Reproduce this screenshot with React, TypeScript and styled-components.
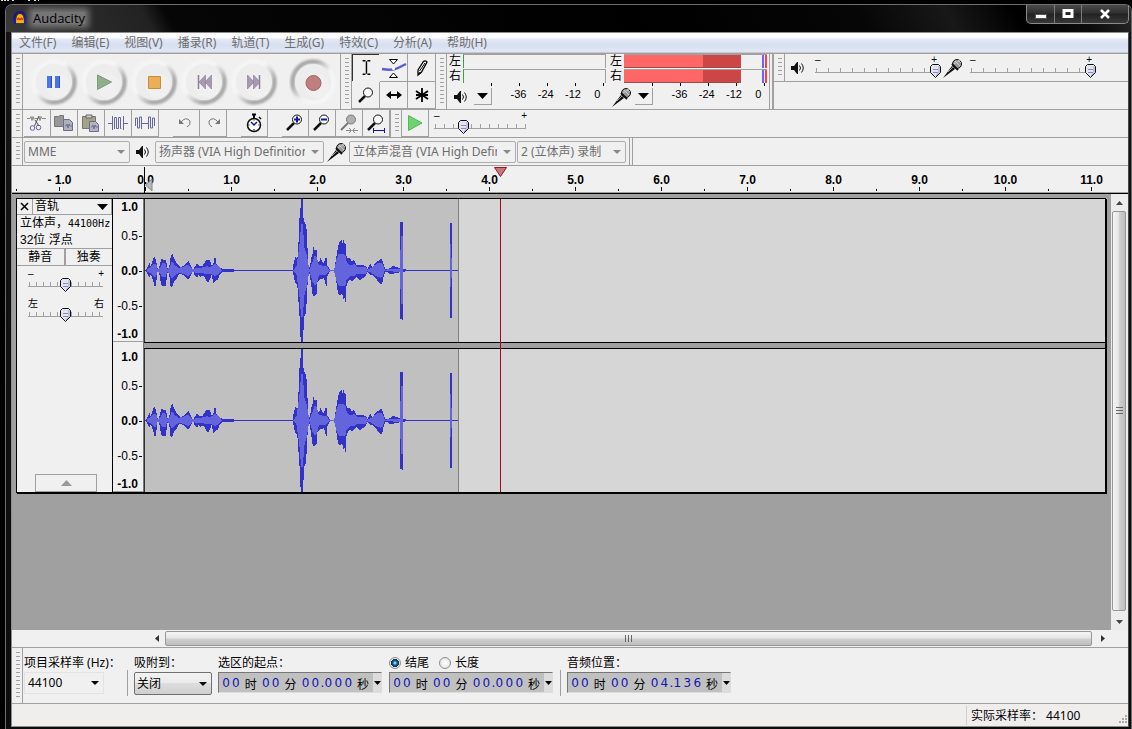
import React from "react";
import styled, { createGlobalStyle, css } from "styled-components";

const LINE = "#a0a0a0";
const FACE = "#f0f0f0";
const UI_FONT = `"Liberation Sans", "Noto Sans CJK SC", sans-serif`;
const SYSTEM_FONT = `"Noto Sans", "Noto Sans CJK SC", sans-serif`;

const svgUrl = (markup: string) => `url("data:image/svg+xml,${encodeURIComponent(markup)}")`;
const arrowImage = (color: string) =>
  svgUrl(`<svg xmlns="http://www.w3.org/2000/svg" width="8" height="4"><path d="M0 0h8L4 4z" fill="${color}"/></svg>`);
const thumbImage = svgUrl(
  `<svg xmlns="http://www.w3.org/2000/svg" width="11" height="14"><path d="M2.5 .5h6l2 2v6l-5 5-5-5v-6z" fill="#e4e4ee" stroke="#111"/><path d="M9 2v6.500L6 12" stroke="#9c9cd0" fill="none"/><path d="M3 5.500h5M3 8.500h5" stroke="#8a8ac0"/></svg>`
);

const GlobalStyle = createGlobalStyle`
  * { box-sizing: border-box; }
  body { margin: 0; background: #000; font: 12px/16px ${UI_FONT}; color: #000; }
  button, select, input { font: inherit; color: inherit; margin: 0; padding: 0; border: 0; background: none; border-radius: 0; }
  svg { display: block; }
`;

/* ---------- window frame ---------- */

const Frame = styled.div`
  min-height: 100vh;
  display: flex;
  flex-direction: column;
  background: #000;
`;
const Desktop = styled.div`
  height: 4px;
  overflow: hidden;
`;
const WindowBox = styled.div`
  flex: 1;
  display: flex;
  flex-direction: column;
  margin-left: 5px;
  padding: 0 2px 2px 5px;
  border: 1px solid #6e6e6e;
  border-width: 1px 1px 0 1px;
  border-radius: 7px 7px 0 0;
  background: linear-gradient(#141414, #0c0c0c);
`;
const TitleBar = styled.header`
  display: flex;
  align-items: flex-start;
  height: 27px;
  margin: 0 -2px 0 -5px;
  padding-left: 5px;
  border-radius: 6px 6px 0 0;
  background: linear-gradient(62deg, #3a3a3a 0, #2c2c2c 60px, #222 130px, #060606 150px, #000 560px, #060606 760px, #181818 840px, #000 900px, #0c0c0c 960px, #333 1020px, #2a2a2a 1100px);
`;
const AppIcon = styled.div`
  padding: 6px 0 0 2px;
  width: 18px;
`;
const Title = styled.h1`
  margin: 7px 0 0 4px;
  font: 13px/12px "Open Sans", sans-serif;
  color: #000;
  background: #757575;
  box-shadow: 0 0 6px 4px #757575;
`;
const CaptionButtons = styled.div`
  display: flex;
  margin-left: auto;
  margin-right: 2px;
  height: 19px;
  border: 1px solid #8a8a8a;
  border-top: 0;
  border-radius: 0 0 5px 5px;
  background: linear-gradient(#4a4a4a, #303030 45%, #222 50%, #383838);
`;
const CaptionButton = styled.button<{ $wide?: boolean }>`
  display: flex;
  align-items: center;
  justify-content: center;
  width: ${(p) => (p.$wide ? 47 : 27)}px;
  & + & { border-left: 1px solid #7a7a7a; }
`;
const Client = styled.main`
  flex: 1;
  display: flex;
  flex-direction: column;
  border: 1px solid #8c8c8c;
  border-right-color: #4a4a4a;
  background: ${FACE};
  min-width: 0;
`;
const MenuBar = styled.nav`
  display: flex;
  gap: 1px;
  height: 20px;
  border-bottom: 1px solid #c8c8d0;
  background: linear-gradient(#fcfcfe 0 5px, #e4e9f5 6px, #d8dff0 12px, #e0e6f4 18px);
`;
const MenuItem = styled.button`
  padding: 0 7px;
  font: 12px/20px ${SYSTEM_FONT};
  color: #6d6d6d;
  white-space: nowrap;
`;

/* ---------- toolbars ---------- */

const DockRow = styled.div<{ $tall?: boolean }>`
  display: flex;
  height: ${(p) => (p.$tall ? 56 : 28)}px;
  border-bottom: 1px solid ${LINE};
`;
const Dock = styled.section`
  border-top: 1px solid ${LINE};
`;
const Toolbar = styled.div<{ $end?: boolean }>`
  display: flex;
  flex: none;
  ${(p) => p.$end && css`border-right: 1px solid ${LINE};`}
`;
const Grip = styled.div`
  flex: none;
  width: 11px;
  border-right: 1px solid ${LINE};
  padding: 4px 2px 3px 4px;
  &::before {
    content: "";
    display: block;
    height: 100%;
    background: repeating-linear-gradient(${LINE} 0 1px, transparent 1px 4px);
  }
`;
const TransportButtons = styled.div`
  display: flex;
  align-items: center;
  gap: 2px;
  padding: 0 3px 0 7px;
`;
const RoundButton = styled.button<{ $spaced?: boolean }>`
  width: 48px;
  height: 48px;
  ${(p) => p.$spaced && css`margin-left: 9px;`}
`;
const ToolGrid = styled.div`
  display: grid;
  grid-template: 28px 27px / 28px 28px 28px;
`;
const IconButton = styled.button<{ $pressed?: boolean }>`
  display: flex;
  align-items: center;
  justify-content: center;
  min-width: 27px;
  border: 0 solid ${LINE};
  border-width: 0 1px 1px 0;
  ${(p) => p.$pressed && css`box-shadow: inset 1px 1px 0 #333; border-color: #f0f0f0;`}
`;
const EditButtons = styled.div`
  display: flex;
  gap: 14px;
  padding-left: 1px;
`;
const ButtonGroup = styled.div`
  display: flex;
`;

/* ---------- meters ---------- */

const MeterPane = styled.div`
  width: 161px;
  padding-left: 2px;
`;
const MeterRow = styled.div`
  display: flex;
  height: 15px;
  padding-bottom: 1px;
  line-height: 15px;
`;
const Channel = styled.span`
  width: 14px;
  font-size: 12px;
`;
const MeterTrack = styled.div<{ $green?: boolean }>`
  display: flex;
  flex: 1;
  margin-right: 2px;
  border-top: 1px solid ${LINE};
  ${(p) => p.$green && css`border-left: 1px solid #3aa53a; border-right: 1px solid ${LINE};`}
`;
const Level = styled.i<{ $w: number; $color: string; $gap?: number }>`
  width: ${(p) => p.$w}px;
  margin-left: ${(p) => p.$gap ?? 0}px;
  background: ${(p) => p.$color};
  ${(p) => p.$w > 2 && css`border-bottom: 1px solid #a04848;`}
`;
const MeterTicks = styled.div`
  height: 3px;
  margin: -1px 0 0 42px;
  background: repeating-linear-gradient(to right, #000 0 1px, transparent 1px 28px);
`;
const MeterControls = styled.div`
  display: flex;
  align-items: center;
  height: 21px;
  margin-left: -1px;
`;
const MeterIcon = styled.div`
  display: flex;
  justify-content: center;
  width: 27px;
`;
const DropButton = styled.button`
  display: flex;
  align-items: center;
  justify-content: center;
  width: 18px;
  height: 17px;
  margin-right: 13px;
  border: 0 solid ${LINE};
  border-width: 0 1px 1px 0;
`;
const ScaleLabel = styled.span<{ $last?: boolean }>`
  align-self: flex-start;
  width: ${(p) => (p.$last ? 22 : 28)}px;
  text-align: center;
  font-size: 11px;
`;

/* ---------- sliders ---------- */

const SliderBox = styled.label<{ $w: number }>`
  display: block;
  width: ${(p) => p.$w}px;
`;
const SliderSigns = styled.span`
  display: flex;
  justify-content: space-between;
  height: 9px;
  padding: 0 4px 0 5px;
  font-size: 10px;
  line-height: 9px;
`;
const Range = styled.input<{ $step: number }>`
  display: block;
  appearance: none;
  width: 100%;
  height: 15px;
  margin-top: -1px;
  background:
    linear-gradient(${LINE}, ${LINE}) 5px 9px / calc(100% - 10px) 1px no-repeat,
    repeating-linear-gradient(to right, ${LINE} 0 1px, transparent 1px ${(p) => p.$step}px) 6px 5px / calc(100% - 11px) 4px no-repeat;
  &::-webkit-slider-thumb {
    appearance: none;
    width: 11px;
    height: 14px;
    background: ${thumbImage} no-repeat;
  }
`;

type SliderProps = { name: string; w: number; step: number; value: number; low?: string; high?: string };
const Slider = ({ name, w, step, value, low = "–", high = "+" }: SliderProps) => (
  <SliderBox $w={w}>
    <SliderSigns><span>{low}</span><span>{high}</span></SliderSigns>
    <Range type="range" aria-label={name} min={0} max={100} defaultValue={value} $step={step} />
  </SliderBox>
);

const MixerColumn = styled.div`
  flex: 1;
  margin-left: 2px;
  border-left: 2px solid ${LINE};
`;
const MixerBar = styled.div`
  display: flex;
  height: 28px;
  border-bottom: 1px solid ${LINE};
`;
const IconSlot = styled.div<{ $w: number }>`
  flex: none;
  display: flex;
  align-items: center;
  justify-content: center;
  width: ${(p) => p.$w}px;
`;
const SliderCell = styled.div`
  padding-top: 1px;
`;

/* ---------- device selects ---------- */

const DeviceBar = styled(Toolbar)`
  align-items: stretch;
`;
const DeviceFields = styled.div`
  display: flex;
  align-items: center;
  padding: 0 2px 0 1px;
  border-right: 1px solid ${LINE};
`;
const DeviceSelect = styled.select<{ $w: number }>`
  appearance: none;
  width: ${(p) => p.$w}px;
  height: 22px;
  margin-right: 1px;
  padding: 0 18px 0 3px;
  border: 1px solid #adadad;
  border-radius: 2px;
  font: 12px/20px ${SYSTEM_FONT};
  color: #6d6d6d;
  background: ${arrowImage("#8a8a8a")} right 4px center no-repeat;
  overflow: hidden;
`;
const DockEnd = styled.div`
  width: 3px;
  border-right: 1px solid ${LINE};
`;

/* ---------- time ruler ---------- */

const TimeRuler = styled.div`
  display: flex;
  height: 28px;
  padding-left: 4px;
  border-bottom: 1px solid #000;
  box-shadow: inset 0 -1px ${LINE};
  overflow: hidden;
  position: relative;
`;
const RulerCell = styled.div`
  flex: none;
  width: 86px;
  height: 25px;
  padding: 6px 0 0 1px;
  text-align: center;
  font-weight: bold;
  background:
    linear-gradient(#000, #000) 43px 100% / 1px 4px no-repeat,
    linear-gradient(#000, #000) 0 100% / 1px 2px no-repeat;
`;
const Marker = styled.svg<{ $left: number; $top: number }>`
  position: absolute;
  left: ${(p) => p.$left}px;
  top: ${(p) => p.$top}px;
`;

/* ---------- tracks ---------- */

const Workspace = styled.section`
  flex: 1;
  display: flex;
  min-height: 0;
  background: ${LINE};
`;
const TrackScroller = styled.div`
  flex: 1;
  min-width: 0;
  padding: 4px 5px 0 4px;
`;
const Track = styled.article`
  display: flex;
  border: 1px solid #000;
  background: ${FACE};
  box-shadow: 1px 1px #000;
`;
const TrackPanel = styled.div`
  display: flex;
  flex-direction: column;
  flex: none;
  width: 96px;
  border-right: 1px solid #000;
`;
const TrackHead = styled.div`
  display: flex;
  height: 16px;
  border-bottom: 1px solid ${LINE};
`;
const CloseButton = styled.button`
  display: flex;
  align-items: center;
  justify-content: center;
  width: 16px;
  border-right: 1px solid ${LINE};
`;
const TrackName = styled.button`
  flex: 1;
  display: flex;
  align-items: center;
  justify-content: space-between;
  padding: 0 3px 0 2px;
  line-height: 15px;
  border-right: 1px solid ${LINE};
`;
const TrackInfo = styled.p`
  margin: 0;
  padding-left: 3px;
  line-height: 16px;
  white-space: nowrap;
  overflow: hidden;
`;
const Mono = styled.span`
  font: 10px/16px "DejaVu Sans Mono", monospace;
`;
const MuteSolo = styled.div`
  display: flex;
  height: 18px;
  border: 1px solid ${LINE};
  border-width: 1px 0;
`;
const MuteButton = styled.button`
  flex: 1;
  line-height: 16px;
  & + & { border-left: 2px solid ${LINE}; }
`;
const TrackSliders = styled.div`
  display: flex;
  flex-direction: column;
  gap: 7px;
  padding: 3px 0 0 6px;
`;
const Collapse = styled.button`
  display: flex;
  align-items: center;
  justify-content: center;
  width: 62px;
  height: 18px;
  margin: auto 0 0 18px;
  border: 1px solid ${LINE};
`;
const LevelRulers = styled.div`
  flex: none;
  display: flex;
  flex-direction: column;
  gap: 7px;
  width: 30px;
`;
const LevelRuler = styled.div`
  display: grid;
  grid-template-rows: 16px 42px 28px 42px 14px;
  align-items: center;
  height: 143px;
  border-bottom: 1px solid ${LINE};
`;
const LevelMark = styled.span<{ $bold?: boolean; $tick?: boolean }>`
  padding-right: 5px;
  text-align: right;
  font-weight: ${(p) => (p.$bold ? "bold" : "normal")};
  ${(p) => p.$tick && css`background: linear-gradient(#000, #000) right 1px center / 3px 1px no-repeat;`}
`;
const Waves = styled.div`
  flex: 1;
  min-width: 0;
  position: relative;
  border-left: 1px solid #777;
`;
const WaveLane = styled.div`
  display: flex;
  height: 143px;
  border-left: 1px solid #333;
  background: #d6d6d6;
`;
const Clip = styled.div`
  border-right: 1px solid #808080;
  background: #c0c0c0;
`;
const LaneGap = styled.div`
  height: 7px;
  border: 1px solid #000;
  border-width: 1px 0;
  background: ${LINE};
`;
const Playhead = styled.div`
  position: absolute;
  top: 0;
  bottom: 0;
  left: 356px;
  width: 1px;
  background: #b00020;
`;

/* ---------- scroll bars ---------- */

const VScroll = styled.div`
  flex: none;
  display: flex;
  flex-direction: column;
  width: 17px;
  background: #ececec;
`;
const ScrollArrow = styled.button`
  flex: none;
  display: flex;
  align-items: center;
  justify-content: center;
  width: 17px;
  height: 17px;
`;
const ThumbV = styled.div`
  flex: 1;
  display: flex;
  align-items: center;
  justify-content: center;
  margin: 0 2px 2px 1px;
  border: 1px solid #979797;
  border-radius: 2px;
  background: linear-gradient(to right, #f4f4f4, #e6e6e6 45%, #cfcfcf 55%, #bdbdc0);
`;
const HScroll = styled.div`
  display: flex;
  height: 17px;
  padding: 0 17px 0 136px;
`;
const ThumbH = styled.div`
  flex: 1;
  display: flex;
  align-items: center;
  justify-content: center;
  height: 15px;
  margin: 1px 2px 0 0;
  border: 1px solid #979797;
  border-radius: 2px;
  background: linear-gradient(#f4f4f4, #e6e6e6 45%, #cfcfcf 55%, #bdbdc0);
`;

/* ---------- selection bar ---------- */

const SelectionBar = styled.footer`
  display: flex;
  height: 57px;
  border-top: 1px solid ${LINE};
  border-bottom: 1px solid ${LINE};
`;
const Field = styled.div<{ $w: number; $divided?: boolean }>`
  width: ${(p) => p.$w}px;
  padding: 5px 0 0 1px;
  ${(p) => p.$divided && css`background: linear-gradient(${LINE}, ${LINE}) right 5px top 22px / 1px 26px no-repeat;`}
`;
const FieldLabel = styled.label`
  display: block;
  height: 19px;
  line-height: 19px;
  white-space: nowrap;
  font-family: ${SYSTEM_FONT};
`;
const RadioRow = styled.div`
  display: flex;
  gap: 10px;
  height: 19px;
`;
const RadioLabel = styled.label`
  display: flex;
  align-items: center;
  gap: 4px;
`;
const Radio = styled.input`
  appearance: none;
  width: 12px;
  height: 12px;
  border: 1px solid #8e8f8f;
  border-radius: 50%;
  background: radial-gradient(#fff, #ddd);
  &:checked { background: radial-gradient(circle, #7fd0f0 0 1px, #17608c 2px, #0d3350 4px, #e8e8e8 4px); }
`;
const RateSelect = styled.select`
  appearance: none;
  width: 80px;
  height: 22px;
  padding-left: 3px;
  border: 1px solid #e2e3ea;
  font: 12px/20px ${SYSTEM_FONT};
  background: ${arrowImage("#000")} right 4px center no-repeat;
`;
const SnapSelect = styled.select`
  appearance: none;
  width: 78px;
  height: 23px;
  padding-left: 2px;
  border: 1px solid #707070;
  border-radius: 2px;
  background: ${arrowImage("#000")} right 4px center no-repeat, linear-gradient(#f2f2f2, #ebebeb 48%, #ddd 50%, #cfcfcf);
`;
const TimeField = styled.div`
  display: flex;
  width: 164px;
  height: 21px;
  padding-left: 2px;
  border: 1px solid #777;
  border-color: #777 #ddd #ddd #777;
  background: #c0c0c0;
`;
const Digit = styled.span<{ $w: number }>`
  width: ${(p) => p.$w}px;
  text-align: center;
  font: 12px/21px "DejaVu Sans", "Noto Sans CJK SC", sans-serif;
  color: #1414b4;
`;
const Unit = styled.span`
  width: 20px;
  text-align: center;
  line-height: 24px;
`;
const TimeDrop = styled.button`
  display: flex;
  align-items: center;
  justify-content: center;
  width: 8px;
  margin-left: auto;
  background: #dcdcdc;
`;
const StatusBar = styled.div`
  display: flex;
  justify-content: flex-end;
  height: 22px;
  background: #f0eeed;
`;
const StatusText = styled.div`
  display: flex;
  justify-content: space-between;
  align-items: flex-end;
  width: 162px;
  margin: 2px 0 1px;
  padding-left: 4px;
  border-left: 1px solid #d0d0d0;
  font: 12px/19px ${SYSTEM_FONT};
`;

/* ---------- icons ---------- */

const Down = ({ w = 11, h = 6, color = "#000" }: { w?: number; h?: number; color?: string }) => (
  <svg width={w} height={h}><path d={`M0 0h${w}L${w / 2} ${h}z`} fill={color} /></svg>
);
const Speaker = () => (
  <svg width="14" height="14" viewBox="0 0 14 14">
    <path d="M0 5h3l3-4h1v12H6L3 9H0z" fill="#111" />
    <path d="M8.500 4.500q2 2.500 0 5M10.500 2.500q3.500 4.500 0 9" stroke="#111" fill="none" />
  </svg>
);
const Mic = () => (
  <svg width="20" height="20" viewBox="0 0 20 20">
    <path d="M0 20L9 8l3 3z" fill="#111" />
    <path d="M5 14l5-5" stroke="#999" />
    <circle cx="14" cy="6" r="4.500" fill="#9a9a9a" stroke="#111" />
    <path d="M9 6l6 6" stroke="#111" strokeWidth="2" />
    <path d="M12 3l5 5M15 2l3 3M11 6l6-4" stroke="#ddd" strokeWidth=".7" />
  </svg>
);
const Loupe = ({ sign, gray, arrows }: { sign?: "+" | "-"; gray?: boolean; arrows?: string }) => {
  const ink = gray ? "#777" : "#111";
  return (
    <svg width="20" height="20" viewBox="0 0 20 20">
      <path d="M9 10L2 17" stroke={ink} strokeWidth={gray ? 2 : 2.5} />
      <circle cx="12" cy="6.500" r="4.500" fill={gray ? "#b0b0b0" : "#fafafa"} stroke={ink} />
      {sign && <path d={sign === "+" ? "M9 6.500h6M12 3.500v6" : "M9 6.500h6"} stroke="#1414a0" strokeWidth="2" />}
      {arrows === "in" && <path d="M7 17.500h5M14 17.500h5M10 15l2.500 2.500L10 20M16 15l-2.500 2.500L16 20" stroke="#888" fill="none" />}
      {arrows === "out" && <path d="M7 17.500h12M7.500 15v5M18.500 15v5" stroke="#1414a0" fill="none" />}
    </svg>
  );
};

// A raised button casts a crescent to its lower right; a sunken one shows it at the upper left.
const Disc = ({ sunken, id, children }: { sunken?: boolean; id: string; children: React.ReactNode }) => (
  <svg width="48" height="48" viewBox="0 0 48 48">
    <defs>
      <linearGradient id={id} x1="0" y1="0" x2="1" y2="1">
        <stop offset={sunken ? 0.3 : 0.42} stopColor={sunken ? "#a8a8a8" : "#f5f5f5"} />
        <stop offset={sunken ? 0.56 : 0.54} stopColor={sunken ? "#f2f2f2" : "#d8d8d8"} />
        <stop offset=".72" stopColor={sunken ? "#f6f6f6" : "#a8a8a8"} />
      </linearGradient>
      <filter id={id + "b"}><feGaussianBlur stdDeviation="1" /></filter>
    </defs>
    <circle cx="24" cy="24" r="20.500" fill="none" stroke={`url(#${id})`} strokeWidth="4.500" filter={`url(#${id}b)`} />
    <circle cx="24" cy="24" r="18" fill="#ededed" />
    <ellipse cx="28" cy="28" rx="12" ry="12" fill="#f0f0f0" />
    {children}
  </svg>
);

const transport = [
  { name: "暂停", art: <><path d="M17 18h5v12h-5zM25 18h5v12h-5z" fill="#4a74ea" /><path d="M21.500 18v12M29.500 18v12" stroke="#2c50c0" /></> },
  { name: "播放", art: <path d="M17.500 17v14.500L31.500 24z" fill="#8fae8d" stroke="#7d9a7b" /> },
  { name: "停止", art: <path d="M18.500 18.500h12v12h-12z" fill="#ecae56" stroke="#c98c3c" /> },
  { name: "跳到开头", art: <><path d="M18.500 17v14" stroke="#8d7f98" strokeWidth="1.500" /><path d="M25.500 17v14L19 24zM31.500 17v14L25 24z" fill="#a799b0" stroke="#8d7f98" strokeWidth=".7" /></> },
  { name: "跳到结尾", art: <><path d="M29.500 17v14" stroke="#8d7f98" strokeWidth="1.500" /><path d="M17.500 17v14L24 24zM23.500 17v14L30 24z" fill="#a799b0" stroke="#8d7f98" strokeWidth=".7" /></> },
];

const tools = [
  { name: "选择工具", pressed: true, art: <svg width="28" height="28" viewBox="0 0 28 28"><path d="M11 6.500h3M16 6.500h3M11 20.500h3M16 20.500h3M15 7v13" stroke="#000" strokeWidth="1.500" fill="none" /></svg> },
  { name: "包络工具", art: <svg width="26" height="26" viewBox="0 0 26 26"><path d="M1 14q10 2 16-1t8-4" stroke="#5a5adc" strokeWidth="2.500" fill="none" /><path d="M8.500 4.500h8L12.500 9z" fill="#fff" stroke="#000" /><path d="M8.500 22.500h8L12.500 18z" fill="#fff" stroke="#000" /><circle cx="12.500" cy="13.500" r="1.500" fill="#fff" /></svg> },
  { name: "绘制工具", art: <svg width="16" height="20" viewBox="0 0 16 20"><path d="M4 12L9.500 3.500Q11 2 13 4L7.500 14 4 17z" fill="#fff" stroke="#000" strokeWidth="1.300" /><path d="M5.500 13L11 5" stroke="#000" /><path d="M4 17l1-3 2 1z" /></svg> },
  { name: "缩放工具", art: <svg width="20" height="20" viewBox="0 0 20 20"><path d="M9 11L3 17" stroke="#111" strokeWidth="2.500" /><circle cx="12" cy="7.500" r="4.500" fill="#fafafa" stroke="#111" /></svg> },
  { name: "时间移动工具", art: <svg width="18" height="10" viewBox="0 0 18 10"><path d="M3 5h12" stroke="#000" strokeWidth="2" /><path d="M1 5l5-4v8zM17 5l-5-4v8z" /></svg> },
  { name: "多功能工具", art: <svg width="14" height="14" viewBox="0 0 14 14"><path d="M7 0v14M1 3l12 8M13 3L1 11M1 7h12" stroke="#000" strokeWidth="1.800" /></svg> },
];

const waveLine = "#66669c";
const editGroups = [
  [
    { name: "剪切", art: <svg width="20" height="18" viewBox="0 0 20 18"><path d="M0 4.500h3l1-2 1 4 1-4 1 3 1-1h3l1-2 1 4 1-4 1 2h4" stroke="#888" fill="none" /><path d="M12 2L7.500 12M8 6l4 6" stroke="#555" /><circle cx="5.500" cy="14" r="2.300" fill="none" stroke={waveLine} /><circle cx="11.500" cy="13.500" r="2.300" fill="none" stroke={waveLine} /></svg> },
    { name: "复制", art: <svg width="20" height="18" viewBox="0 0 20 18"><path d="M.5 2.500h4l1-1h4v11h-9z" fill="#989898" stroke="#777" /><path d="M9.500 5.500h6l3 3v8h-9z" fill="#b0b0b8" stroke="#6c6c90" /><path d="M11 12h1l1-2 1 4 1-4 1 2h2" stroke="#70709a" fill="none" /></svg> },
    { name: "粘贴", art: <svg width="18" height="18" viewBox="0 0 18 18"><path d="M.5 2.500h13v12H.5z" fill="#a3a286" stroke="#77776a" /><path d="M4 1h6v3H4z" fill="#ccc" stroke="#666" /><path d="M7.500 7.500h6l3 3v7h-9z" fill="#b4b4be" stroke="#6c6c90" /><path d="M9 13h1l1-2 1 4 1-4 1 2h2" stroke="#70709a" fill="none" /></svg> },
    { name: "修剪", art: <svg width="20" height="16" viewBox="0 0 20 16"><path d="M0 8.500h4M15 8.500h5M4.500 1v14M15.500 1v14M6.500 14V2.500h2v11h2V2.500h2v11h1" stroke={waveLine} fill="none" /></svg> },
    { name: "静音", art: <svg width="22" height="16" viewBox="0 0 22 16"><path d="M1.500 11V3h2v10h2V2h2v12M8 8.500h6M14.500 14V2h2v11h2V3h2v8" stroke={waveLine} fill="none" /></svg> },
  ],
  [
    { name: "撤销", art: <svg width="16" height="12" viewBox="0 0 16 12"><path d="M3 5Q8-1 12 4q1 4-3 6" stroke="#777" fill="none" /><path d="M1 2v5h5z" fill="#777" /></svg> },
    { name: "重做", art: <svg width="16" height="12" viewBox="0 0 16 12"><path d="M13 5Q8-1 4 4q-1 4 3 6" stroke="#777" fill="none" /><path d="M15 2v5h-5z" fill="#777" /></svg> },
  ],
  [
    { name: "同步锁定", art: <svg width="18" height="20" viewBox="0 0 18 20"><path d="M7 1.500h4M9 1v4" stroke="#000" strokeWidth="2" /><path d="M14 4l2 2" stroke="#000" strokeWidth="1.500" /><circle cx="9" cy="12" r="6.500" fill="#fff" stroke="#111" strokeWidth="1.500" /><path d="M6 9l3 3 3-3" stroke="#1414a0" strokeWidth="1.500" fill="none" /><path d="M9 6.500v1M9 16v1.500M3.500 12h1M13.500 12h1" stroke="#000" /></svg> },
  ],
  [
    { name: "放大", art: <Loupe sign="+" /> },
    { name: "缩小", art: <Loupe sign="-" /> },
    { name: "适应选区", art: <Loupe gray arrows="in" /> },
    { name: "适应项目", art: <Loupe arrows="out" /> },
  ],
];

/* ---------- waveform ---------- */

// Envelope samples: [x, height above the axis, height below it], three units to a pixel.
type Sample = [number, number, number];
const outer: Sample[] = [
  [0, 1, 1], [6, 5, 5], [9, 14, 15], [13, 22, 20], [17, 12, 12], [21, 22, 20], [25, 35, 32], [29, 42, 48], [33, 30, 46], [37, 6, 4],
  [42, 4, 4], [45, 22, 25], [49, 33, 45], [53, 33, 48], [59, 30, 48], [63, 32, 48], [66, 10, 10], [70, 4, 4], [73, 12, 15], [77, 40, 50], [82, 52, 48],
  [86, 40, 35], [90, 30, 30], [95, 20, 25], [101, 14, 12], [107, 10, 10], [115, 14, 14], [121, 18, 18], [130, 28, 28], [135, 18, 22], [141, 6, 6],
  [145, 3, 3], [149, 10, 15], [155, 20, 22], [161, 14, 14], [167, 12, 20], [173, 14, 16], [178, 22, 18], [183, 32, 30], [189, 30, 38], [195, 30, 28],
  [200, 14, 14], [205, 20, 38], [210, 46, 35], [214, 20, 30], [219, 14, 28], [224, 10, 14], [231, 5, 6], [234, 4, 4], [267, 4, 4], [268, 1, 1],
  [443, 1, 3], [447, 28, 22], [453, 42, 44], [457, 28, 40], [459, 68, 90], [462, 100, 100], [463, 157, 120], [465, 158, 185], [468, 215, 215], [474, 215, 215],
  [475, 157, 185], [477, 157, 160], [479, 140, 130], [482, 137, 130], [485, 120, 95], [487, 75, 50], [489, 45, 30], [491, 8, 8], [495, 10, 15],
  [498, 35, 40], [502, 45, 70], [505, 72, 75], [507, 60, 78], [515, 60, 70], [517, 30, 35], [522, 22, 30], [527, 38, 27], [532, 25, 27], [537, 20, 20],
  [540, 38, 40], [545, 38, 48], [546, 15, 20], [553, 5, 5], [557, 1, 1], [567, 2, 2], [570, 12, 14], [573, 38, 28], [576, 50, 50], [580, 75, 70],
  [584, 88, 75], [590, 90, 70], [592, 80, 72], [595, 92, 90], [597, 84, 75], [602, 80, 98], [604, 45, 50], [609, 35, 35], [615, 38, 28], [621, 25, 35],
  [627, 32, 28], [635, 14, 20], [645, 16, 30], [655, 16, 22], [663, 12, 15], [667, 3, 5], [673, 14, 10], [677, 20, 15], [681, 10, 14], [687, 16, 20],
  [692, 22, 25], [697, 28, 30], [702, 30, 36], [709, 34, 43], [713, 28, 35], [716, 16, 18], [721, 4, 4], [728, 4, 4], [733, 6, 12], [745, 13, 10],
  [755, 10, 8], [764, 6, 6], [765, 145, 145], [773, 145, 148], [774, 5, 5], [783, 2, 2], [784, 1, 1], [914, 1, 1], [915, 142, 142], [920, 142, 142], [921, 1, 1], [939, 1, 1],
];
const inner: Sample[] = [
  [6, 3, 3], [15, 8, 8], [25, 18, 18], [33, 20, 20], [38, 3, 3], [45, 8, 8], [53, 24, 22], [62, 20, 20], [67, 3, 3], [75, 12, 12], [81, 28, 26],
  [90, 15, 15], [100, 8, 8], [115, 10, 10], [130, 18, 18], [137, 10, 10], [143, 3, 3], [155, 8, 8], [170, 8, 8], [185, 12, 12], [197, 10, 10],
  [210, 20, 18], [220, 14, 12], [231, 0, 0], [445, 0, 0], [455, 14, 14], [459, 45, 45], [465, 90, 90], [468, 140, 140], [474, 140, 140], [477, 70, 80],
  [485, 48, 50], [489, 25, 25], [493, 2, 2], [502, 25, 33], [509, 45, 45], [515, 38, 40], [522, 15, 15], [537, 14, 14], [545, 12, 12], [553, 2, 2],
  [567, 1, 1], [575, 35, 35], [581, 50, 45], [593, 50, 48], [601, 45, 45], [605, 25, 28], [615, 16, 18], [629, 18, 18], [637, 10, 10], [663, 10, 10],
  [667, 2, 2], [680, 8, 8], [695, 20, 18], [705, 22, 22], [713, 20, 20], [719, 2, 2], [735, 3, 3], [755, 4, 4], [766, 4, 4], [767, 103, 100], [773, 103, 100],
  [774, 0, 0], [915, 0, 0], [916, 78, 50], [919, 78, 50], [920, 0, 0],
];
const outline = (s: Sample[]) =>
  [...s.map(([x, up]) => `${x},${214 - up}`), ...[...s].reverse().map(([x, , dn]) => `${x},${214 + dn}`)].join(" ");

const Waveform = () => (
  <svg width="313" height="143" viewBox="0 0 939 429" shapeRendering="crispEdges">
    <polygon points={outline(outer)} fill="#3232c8" />
    <path d="M0 214.500h939" stroke="#3232c8" strokeWidth="3" />
    <polygon points={outline(inner)} fill="#6464dc" />
  </svg>
);

const LevelScale = () => (
  <LevelRuler>
    <LevelMark $bold>1.0</LevelMark>
    <LevelMark $tick>0.5</LevelMark>
    <LevelMark $bold $tick>0.0</LevelMark>
    <LevelMark $tick>-0.5</LevelMark>
    <LevelMark $bold>-1.0</LevelMark>
  </LevelRuler>
);

const TimeControl = ({ seconds, name }: { seconds: string; name: string }) => {
  const digits = (s: string) => [...s].map((c, i) => <Digit key={i} $w={c === "." ? 3 : 10}>{c}</Digit>);
  return (
    <TimeField role="group" aria-label={name}>
      {digits("00")}<Unit>时</Unit>{digits("00")}<Unit>分</Unit>{digits(seconds)}<Unit>秒</Unit>
      <TimeDrop aria-label="格式"><Down w={7} h={4} /></TimeDrop>
    </TimeField>
  );
};

const scale = ["-36", "-24", "-12", "0"];
const menus = ["文件(F)", "编辑(E)", "视图(V)", "播录(R)", "轨道(T)", "生成(G)", "特效(C)", "分析(A)", "帮助(H)"];
const seconds = ["- 1.0", "0.0", "1.0", "2.0", "3.0", "4.0", "5.0", "6.0", "7.0", "8.0", "9.0", "10.0", "11.0"];

export default function App() {
  return (
    <Frame>
      <GlobalStyle />
      <Desktop>
        <svg width="42" height="2"><path d="M1 .5h9M12 .5h3M28 .5h3M34 .5h2M38 .5h1" stroke="#ddd" strokeDasharray="2 1" /></svg>
      </Desktop>
      <WindowBox>
        <TitleBar>
          <AppIcon>
            <svg width="14" height="14" viewBox="0 0 14 14">
              <path d="M1.500 10V6q1-5 5.500-5t5.500 5v4" stroke="#15158c" strokeWidth="2" fill="none" />
              <path d="M0 7h3v6H1zM11 7h3l-1 6h-2z" fill="#1c1ca0" />
              <path d="M3 12q0-9 4-9t4 9z" fill="#ffb400" />
              <path d="M4 8.500l1.500-1 1.500 1 1.500-1 1.500 1" stroke="#e02000" strokeWidth="1.500" fill="none" />
            </svg>
          </AppIcon>
          <Title>Audacity</Title>
          <CaptionButtons>
            <CaptionButton aria-label="最小化"><svg width="12" height="12"><path d="M.5 6.500h11v4h-11z" fill="#fff" stroke="#555" /></svg></CaptionButton>
            <CaptionButton aria-label="最大化"><svg width="12" height="12"><path d="M2 2.500h8v6H2z" fill="none" stroke="#fff" strokeWidth="3" /></svg></CaptionButton>
            <CaptionButton $wide aria-label="关闭"><svg width="12" height="12"><path d="M2 2l8 8M10 2l-8 8" stroke="#fff" strokeWidth="2.500" /></svg></CaptionButton>
          </CaptionButtons>
        </TitleBar>
        <Client>
          <MenuBar>{menus.map((m) => <MenuItem key={m}>{m}</MenuItem>)}</MenuBar>
          <Dock>
            <DockRow $tall>
              <Toolbar $end>
                <Grip />
                <TransportButtons>
                  {transport.map((b, i) => (
                    <RoundButton key={b.name} aria-label={b.name}><Disc id={`disc${i}`}>{b.art}</Disc></RoundButton>
                  ))}
                  <RoundButton $spaced aria-label="录制">
                    <Disc id="discRec" sunken><circle cx="24.500" cy="25" r="7.500" fill="#c07e7e" stroke="#a06464" /></Disc>
                  </RoundButton>
                </TransportButtons>
              </Toolbar>
              <Toolbar>
                <Grip />
                <ToolGrid>
                  {tools.map((t) => <IconButton key={t.name} aria-label={t.name} $pressed={t.pressed}>{t.art}</IconButton>)}
                </ToolGrid>
              </Toolbar>
              <Toolbar $end>
                <Grip />
                <MeterPane>
                  <MeterRow><Channel>左</Channel><MeterTrack $green /></MeterRow>
                  <MeterRow><Channel>右</Channel><MeterTrack $green /></MeterRow>
                  <MeterTicks />
                  <MeterControls>
                    <MeterIcon><Speaker /></MeterIcon>
                    <DropButton aria-label="播放电平"><Down /></DropButton>
                    {scale.map((s) => <ScaleLabel key={s} $last={s === "0"}>{s}</ScaleLabel>)}
                  </MeterControls>
                </MeterPane>
                <MeterPane>
                  {["左", "右"].map((c) => (
                    <MeterRow key={c}>
                      <Channel>{c}</Channel>
                      <MeterTrack>
                        <Level $w={79} $color="#ff6666" />
                        <Level $w={38} $color="#cc4646" />
                        <Level $w={2} $gap={21} $color="#6666ff" />
                        <Level $w={2} $gap={1} $color="#ff3c3c" />
                      </MeterTrack>
                    </MeterRow>
                  ))}
                  <MeterTicks />
                  <MeterControls>
                    <MeterIcon><Mic /></MeterIcon>
                    <DropButton aria-label="录制电平"><Down /></DropButton>
                    {scale.map((s) => <ScaleLabel key={s} $last={s === "0"}>{s}</ScaleLabel>)}
                  </MeterControls>
                </MeterPane>
              </Toolbar>
              <MixerColumn>
                <MixerBar>
                  <Grip />
                  <IconSlot $w={25}><Speaker /></IconSlot>
                  <SliderCell><Slider name="输出音量" w={131} step={12} value={100} /></SliderCell>
                  <IconSlot $w={24}><Mic /></IconSlot>
                  <SliderCell><Slider name="输入音量" w={131} step={12} value={100} /></SliderCell>
                </MixerBar>
              </MixerColumn>
            </DockRow>
            <DockRow>
              <Toolbar $end>
                <Grip />
                <EditButtons>
                  {editGroups.map((g, i) => (
                    <ButtonGroup key={i}>
                      {g.map((b) => <IconButton key={b.name} aria-label={b.name}>{b.art}</IconButton>)}
                    </ButtonGroup>
                  ))}
                </EditButtons>
              </Toolbar>
              <Toolbar>
                <Grip />
                <IconButton aria-label="按速度播放">
                  <svg width="16" height="18"><path d="M1.500 1.500v15L15 9z" fill="#6fd36f" stroke="#57b557" /></svg>
                </IconButton>
                <SliderCell><Slider name="播放速度" w={102} step={9} value={32} /></SliderCell>
              </Toolbar>
            </DockRow>
            <DockRow>
              <DeviceBar>
                <Grip />
                <DeviceFields>
                  <DeviceSelect $w={106} aria-label="音频主机"><option>MME</option></DeviceSelect>
                  <IconSlot $w={24}><Speaker /></IconSlot>
                  <DeviceSelect $w={169} aria-label="输出设备"><option>扬声器 (VIA High Definition</option></DeviceSelect>
                  <IconSlot $w={24}><Mic /></IconSlot>
                  <DeviceSelect $w={167} aria-label="输入设备"><option>立体声混音 (VIA High Definition</option></DeviceSelect>
                  <DeviceSelect $w={109} aria-label="声道"><option>2 (立体声) 录制</option></DeviceSelect>
                </DeviceFields>
                <DockEnd />
              </DeviceBar>
            </DockRow>
          </Dock>
          <TimeRuler>
            {seconds.map((s) => <RulerCell key={s}>{s}</RulerCell>)}
            <Marker $left={132} $top={1} width="9" height="26"><path d="M.5 0v26" stroke="#000" /><path d="M8 12v12L1.500 18z" fill="#b8b8b8" stroke="#888" /></Marker>
            <Marker $left={482} $top={1} width="13" height="10"><path d="M.5 .5h12L6.500 9.500z" fill="#c07a7a" stroke="#a01428" /></Marker>
          </TimeRuler>
          <Workspace>
            <TrackScroller>
              <Track>
                <TrackPanel>
                  <TrackHead>
                    <CloseButton aria-label="关闭轨道"><svg width="9" height="9"><path d="M1 1l7 7M8 1L1 8" stroke="#000" strokeWidth="1.500" /></svg></CloseButton>
                    <TrackName>音轨<Down /></TrackName>
                  </TrackHead>
                  <TrackInfo>立体声，<Mono>44100Hz</Mono></TrackInfo>
                  <TrackInfo>32位 浮点</TrackInfo>
                  <MuteSolo><MuteButton>静音</MuteButton><MuteButton>独奏</MuteButton></MuteSolo>
                  <TrackSliders>
                    <Slider name="增益" w={85} step={7} value={50} />
                    <Slider name="声像" w={85} step={7} value={50} low="左" high="右" />
                  </TrackSliders>
                  <Collapse aria-label="折叠"><svg width="11" height="6"><path d="M0 6h11L5.500 0z" fill="#999" /></svg></Collapse>
                </TrackPanel>
                <LevelRulers><LevelScale /><LevelScale /></LevelRulers>
                <Waves>
                  <WaveLane><Clip><Waveform /></Clip></WaveLane>
                  <LaneGap />
                  <WaveLane><Clip><Waveform /></Clip></WaveLane>
                  <Playhead />
                </Waves>
              </Track>
            </TrackScroller>
            <VScroll>
              <ScrollArrow aria-label="向上"><svg width="7" height="4"><path d="M0 4h7L3.500 0z" fill="#444" /></svg></ScrollArrow>
              <ThumbV><svg width="7" height="8"><path d="M0 .5h7M0 3.500h7M0 6.500h7" stroke="#666" /></svg></ThumbV>
              <ScrollArrow aria-label="向下"><Down w={7} h={4} color="#444" /></ScrollArrow>
            </VScroll>
          </Workspace>
          <HScroll>
            <ScrollArrow aria-label="向左"><svg width="4" height="7"><path d="M4 0v7L0 3.500z" fill="#333" /></svg></ScrollArrow>
            <ThumbH><svg width="8" height="7"><path d="M.5 0v7M3.500 0v7M6.500 0v7" stroke="#666" /></svg></ThumbH>
            <ScrollArrow aria-label="向右"><svg width="4" height="7"><path d="M0 0v7l4-3.500z" fill="#333" /></svg></ScrollArrow>
          </HScroll>
          <SelectionBar>
            <Grip />
            <Field $w={110} $divided>
              <FieldLabel htmlFor="rate">项目采样率 (Hz)：</FieldLabel>
              <RateSelect id="rate"><option>44100</option></RateSelect>
            </Field>
            <Field $w={84}>
              <FieldLabel htmlFor="snap">吸附到：</FieldLabel>
              <SnapSelect id="snap"><option>关闭</option></SnapSelect>
            </Field>
            <Field $w={171}>
              <FieldLabel as="div">选区的起点：</FieldLabel>
              <TimeControl name="选区的起点" seconds="00.000" />
            </Field>
            <Field $w={178} $divided>
              <RadioRow>
                <RadioLabel><Radio type="radio" name="end" defaultChecked />结尾</RadioLabel>
                <RadioLabel><Radio type="radio" name="end" />长度</RadioLabel>
              </RadioRow>
              <TimeControl name="结尾" seconds="00.000" />
            </Field>
            <Field $w={171}>
              <FieldLabel as="div">音频位置：</FieldLabel>
              <TimeControl name="音频位置" seconds="04.136" />
            </Field>
          </SelectionBar>
          <StatusBar>
            <StatusText>
              <span>实际采样率： 44100</span>
              <svg width="10" height="10"><path d="M7 1h2M4 4h2M7 4h2M1 7h2M4 7h2M7 7h2" stroke="#aaa" strokeWidth="2" /></svg>
            </StatusText>
          </StatusBar>
        </Client>
      </WindowBox>
    </Frame>
  );
}
